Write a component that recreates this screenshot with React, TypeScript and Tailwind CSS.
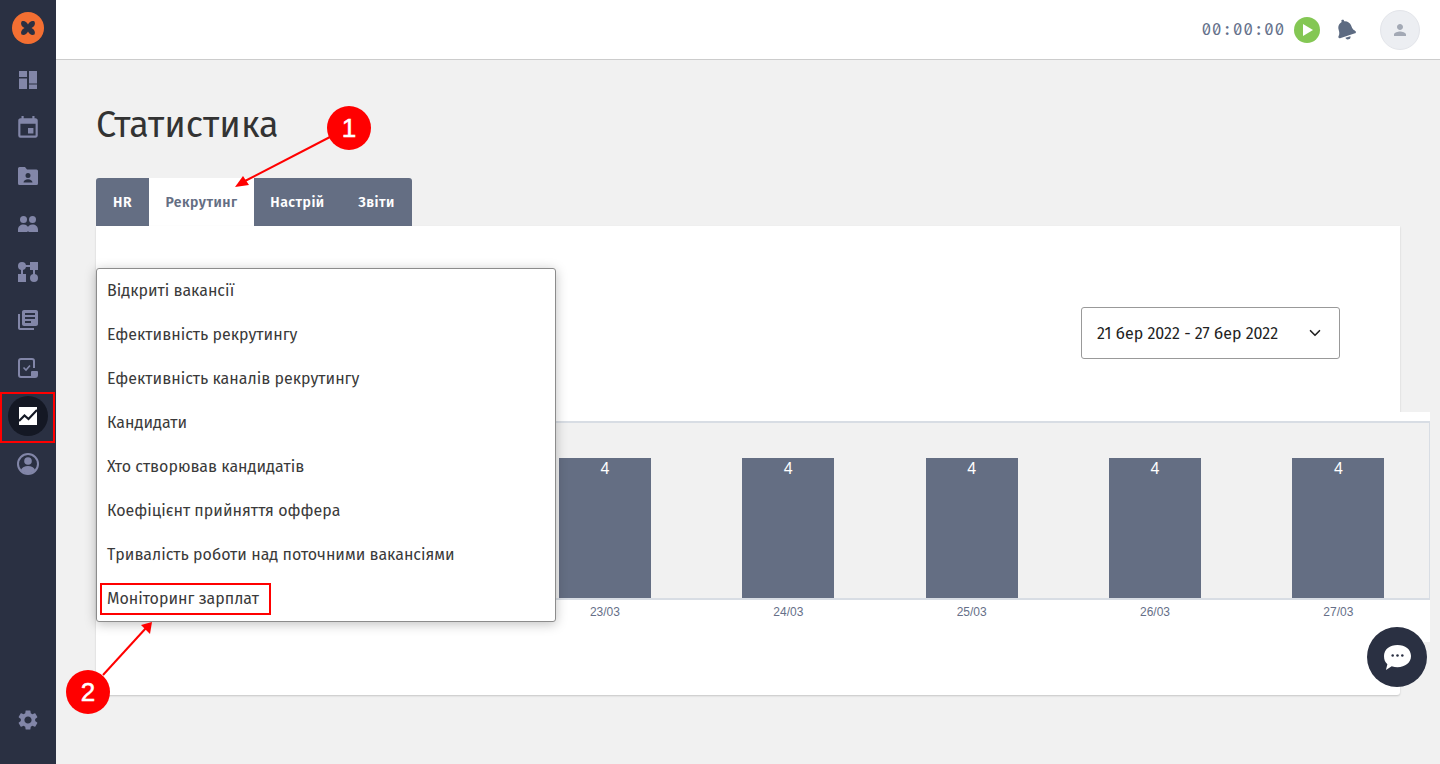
import { ChevronDown } from "lucide-react";
import { FaBell } from "react-icons/fa";
import { MdEvent, MdLibraryBooks, MdPerson, MdSettings } from "react-icons/md";

const font = "font-['Fira_Sans','Noto_Sans',sans-serif]";

const menuItems = [
  "Відкриті вакансії",
  "Ефективність рекрутингу",
  "Ефективність каналів рекрутингу",
  "Кандидати",
  "Хто створював кандидатів",
  "Коефіцієнт прийняття оффера",
  "Тривалість роботи над поточними вакансіями",
  "Моніторинг зарплат",
];

// the first two days sit behind the open menu
const days = ["", "", "23/03", "24/03", "25/03", "26/03", "27/03"];

function Dashboard() {
  return (
    <svg viewBox="0 0 18 18" className="h-[18px] w-[18px]" fill="currentColor">
      <rect x="0" y="0" width="8" height="6" />
      <rect x="0" y="7.500" width="8" height="10.500" />
      <rect x="10" y="0" width="8" height="12.500" />
      <rect x="10" y="13.500" width="8" height="4.500" />
    </svg>
  );
}

function FolderPerson() {
  return (
    <svg viewBox="0 0 20 18" className="h-[18px] w-5" fill="currentColor">
      <path
        fillRule="evenodd"
        d="M1.500 0H7l2 2.500h9.500A1.500 1.500 0 0 1 20 4v12.500a1.500 1.500 0 0 1-1.500 1.500h-17A1.500 1.500 0 0 1 0 16.500v-15A1.500 1.500 0 0 1 1.500 0ZM10 6a2.500 2.500 0 1 0 0 5 2.500 2.500 0 0 0 0-5Zm-4.500 9.500h9c0-2-2-3.300-4.500-3.300s-4.500 1.300-4.500 3.300Z"
      />
    </svg>
  );
}

function People() {
  return (
    <svg viewBox="0 0 20 16" className="h-4 w-5" fill="currentColor">
      <circle cx="5.500" cy="3.500" r="3.500" />
      <circle cx="14.500" cy="3.500" r="3.500" />
      <path d="M0 16v-2.500C0 10.500 2.500 8.500 5.500 8.500S9.500 10 10 11c.5-1 1.500-2.500 4.500-2.500s5.500 2 5.500 5V16H10.800v-.5H9.200v.5Z" />
    </svg>
  );
}

function Workflow() {
  return (
    <svg viewBox="0 0 20 20" className="h-5 w-5" fill="currentColor">
      <circle cx="4" cy="4" r="4" />
      <rect x="12" y="0" width="8" height="8" />
      <rect x="0" y="12" width="8" height="8" />
      <circle cx="16" cy="16" r="4" />
      <rect x="7" y="3" width="6" height="2" />
      <rect x="3" y="7" width="2" height="6" />
      <rect x="15" y="7" width="2" height="6" />
    </svg>
  );
}

function TaskBox() {
  return (
    <svg viewBox="0 0 20 20" className="h-5 w-5">
      <path
        d="M1 3a2 2 0 0 1 2-2h11a2 2 0 0 1 2 2v7M1 3v14a2 2 0 0 0 2 2h10"
        fill="none"
        stroke="currentColor"
        strokeWidth="2"
      />
      <path d="M13 20v-6a1 1 0 0 1 1-1h5a1 1 0 0 1 1 1v3a3 3 0 0 1-3 3Z" fill="currentColor" />
      <path d="m5.500 9.500 2.500 2.500 4-4.500" fill="none" stroke="currentColor" strokeWidth="1.600" />
    </svg>
  );
}

function TrendCard() {
  return (
    <svg viewBox="0 0 18 18" className="h-[18px] w-[18px]">
      <rect width="18" height="18" fill="#ffffff" />
      <path d="M0 14 5.500 8.500l4 3.500L18 3" fill="none" stroke="#141824" strokeWidth="2.200" />
    </svg>
  );
}

function AccountRing() {
  return (
    <svg viewBox="0 0 22 22" className="h-[22px] w-[22px]" fill="currentColor">
      <circle cx="11" cy="11" r="10" fill="none" stroke="currentColor" strokeWidth="2" />
      <circle cx="11" cy="8" r="3.800" />
      <path d="M3.800 17c1.200-2.600 4-4 7.200-4s6 1.400 7.200 4c-1.800 2.200-4.400 3.500-7.200 3.500S5.600 19.200 3.800 17Z" />
    </svg>
  );
}

function Logo() {
  return (
    <svg viewBox="0 0 32 32" className="h-8 w-8">
      <circle cx="16" cy="16" r="16" fill="#f36f32" />
      <path
        d="M9.500 9.500c2.500-1.200 5 0 6.500 3 1.500-3 4-4.200 6.500-3 1.200 2.500 0 5-3 6.500 3 1.500 4.200 4 3 6.500-2.500 1.200-5 0-6.500-3-1.500 3-4 4.200-6.500 3-1.200-2.500 0-5 3-6.500-3-1.500-4.200-4-3-6.500Z"
        fill="#2a3042"
      />
    </svg>
  );
}

function Sidebar() {
  const itemClass = "flex h-12 w-full items-center justify-center text-[#8286a8]";

  return (
    <aside className="flex w-14 shrink-0 flex-col items-center bg-[#2a3042] pt-3">
      <Logo />
      <nav className="mt-3 flex w-full flex-col">
        <div className={itemClass}><Dashboard /></div>
        <div className={itemClass}><MdEvent size={26} /></div>
        <div className={itemClass}><FolderPerson /></div>
        <div className={itemClass}><People /></div>
        <div className={itemClass}><Workflow /></div>
        <div className={itemClass}><MdLibraryBooks size={24} /></div>
        <div className={itemClass}><TaskBox /></div>
        <div className={itemClass}>
          <div className="flex h-10 w-10 items-center justify-center rounded-full bg-[#141824]">
            <TrendCard />
          </div>
        </div>
        <div className={itemClass}><AccountRing /></div>
      </nav>
      <div className="mt-auto mb-[32px] text-[#8286a8]">
        <MdSettings size={24} />
      </div>
    </aside>
  );
}

function Header() {
  return (
    <header className="flex h-[60px] shrink-0 items-center justify-end border-b border-[#cccccc] bg-white pr-5">
      <span className="font-['Fira_Code','Fira_Mono','DejaVu_Sans_Mono',monospace] text-[16px] tracking-[0.6px] text-[#64708a]">
        00:00:00
      </span>
      <div className="ml-[9px] flex h-[26px] w-[26px] items-center justify-center rounded-full bg-[#84c754]">
        <svg viewBox="0 0 10 12" className="ml-[2px] h-3 w-[10px]" fill="#ffffff">
          <path d="M0 0 10 6 0 12Z" />
        </svg>
      </div>
      <FaBell size={21} className="ml-[15px] -rotate-[18deg] text-[#5d6b82]" />
      <div className="ml-[24px] flex h-10 w-10 items-center justify-center rounded-full border border-[#e3e5ea] bg-[#eceef2] text-[#a3a9b5]">
        <MdPerson size={18} />
      </div>
    </header>
  );
}

function Tabs() {
  return (
    <div className={`flex h-12 w-[316px] overflow-hidden rounded-t-[3px] bg-[#646e83] text-[14px] font-semibold tracking-[0.5px] text-white ${font}`}>
      <div className="flex w-[53px] items-center justify-center">HR</div>
      <div className="flex w-[105px] items-center justify-center bg-white text-[#646e83]">Рекрутинг</div>
      <div className="flex w-[87px] items-center justify-center">Настрій</div>
      <div className="flex w-[71px] items-center justify-center">Звіти</div>
    </div>
  );
}

function Chart() {
  return (
    <div className="mt-[53px] -mr-[30px] flex h-[230px] bg-white pt-[9px]">
      <div className="w-[50.6px] shrink-0" />
      <div className="flex-1">
        <div className="h-[179px] border-t-2 border-r border-b-2 border-[#d8dde4] bg-[#f1f1f1]">
          <div className="-mr-px grid h-full grid-cols-7 items-end">
            {days.map((day, i) => (
              <div key={i}>
                {day && (
                  <div className="mx-auto flex h-[140px] w-[92px] justify-center bg-[#646e83] font-['Liberation_Sans',sans-serif] text-[16px] leading-[22px] text-white">
                    4
                  </div>
                )}
              </div>
            ))}
          </div>
        </div>
        <div className="mt-[5px] grid grid-cols-7">
          {days.map((day, i) => (
            <div key={i} className="text-center font-['Liberation_Sans',sans-serif] text-[12px] leading-[14px] text-[#666f88]">
              {day}
            </div>
          ))}
        </div>
      </div>
    </div>
  );
}

function ReportMenu() {
  return (
    <div className={`absolute top-[42px] left-0 z-10 w-[460px] rounded-[3px] border border-[#8c8c8c] bg-white text-[16px] text-[#3a3a3a] shadow-[0_2px_12px_rgba(0,0,0,0.25)] ${font}`}>
      {menuItems.map((item) => (
        <div key={item} className="flex h-11 items-center px-[10px]">
          {item}
        </div>
      ))}
    </div>
  );
}

function Annotations() {
  const badge =
    "absolute z-30 flex h-11 w-11 items-center justify-center rounded-full bg-[#ff0000] font-['Liberation_Sans',sans-serif] text-[26px] text-white [-webkit-text-stroke:0.5px_white]";

  return (
    <>
      <svg className="pointer-events-none absolute top-0 left-0 z-30 h-[764px] w-[1440px]" viewBox="0 0 1440 764">
        <path d="M330 137 245 181" stroke="#ff0000" strokeWidth="2" />
        <path d="M235 187 243 176 249 185Z" fill="#ff0000" />
        <path d="M103 675 146 628" stroke="#ff0000" strokeWidth="2" />
        <path d="M152 622 150 634 141 625Z" fill="#ff0000" />
      </svg>
      <div className={`top-[106px] left-[327px] ${badge}`}>1</div>
      <div className={`top-[670px] left-[66px] ${badge}`}>2</div>
      <div className="absolute top-[392px] left-0 z-30 h-[51px] w-[55px] border-2 border-[#ff0000]" />
      <div className="absolute top-[583px] left-[100px] z-30 h-[32px] w-[171px] border-2 border-[#ff0000]" />
    </>
  );
}

export default function App() {
  return (
    <div className="relative flex h-[764px] w-[1440px] overflow-hidden bg-[#f1f1f1]">
      <Sidebar />
      <div className="flex min-w-0 flex-1 flex-col">
        <Header />
        <main className="px-10 pt-[43px]">
          <h1 className={`h-11 text-[36px] leading-[44px] text-[#333333] ${font}`}>Статистика</h1>
          <div className="mt-[31px]">
            <Tabs />
            <div className="relative h-[469px] rounded-b-[3px] bg-white pt-[81px] shadow-[0_1px_2px_rgba(0,0,0,0.18)]">
              <div className="flex justify-end pr-[60px]">
                <div className={`flex h-[52px] w-[259px] items-center justify-between rounded-[3px] border border-[#999999] px-[15px] text-[16px] text-[#222222] ${font}`}>
                  <span className="mt-[2px]">21 бер 2022 - 27 бер 2022</span>
                  <ChevronDown size={18} strokeWidth={2.2} />
                </div>
              </div>
              <Chart />
              <ReportMenu />
            </div>
          </div>
        </main>
      </div>
      <div className="absolute top-[627px] left-[1367px] z-20 flex h-[60px] w-[60px] items-center justify-center rounded-full bg-[#2a3042]">
        <svg viewBox="0 0 30 28" className="h-[27px] w-[29px]">
          <path d="M15 1c8 0 14 4.500 14 11.500S23 24 15 24c-2 0-4-.3-6-1l-6 4 1.500-6C2 19 1 16 1 12.500 1 5.500 7 1 15 1Z" fill="#ffffff" />
          <circle cx="10" cy="12" r="1.300" fill="#2a3042" />
          <circle cx="15" cy="12" r="1.300" fill="#2a3042" />
          <circle cx="20" cy="12" r="1.300" fill="#2a3042" />
        </svg>
      </div>
      <Annotations />
    </div>
  );
}
